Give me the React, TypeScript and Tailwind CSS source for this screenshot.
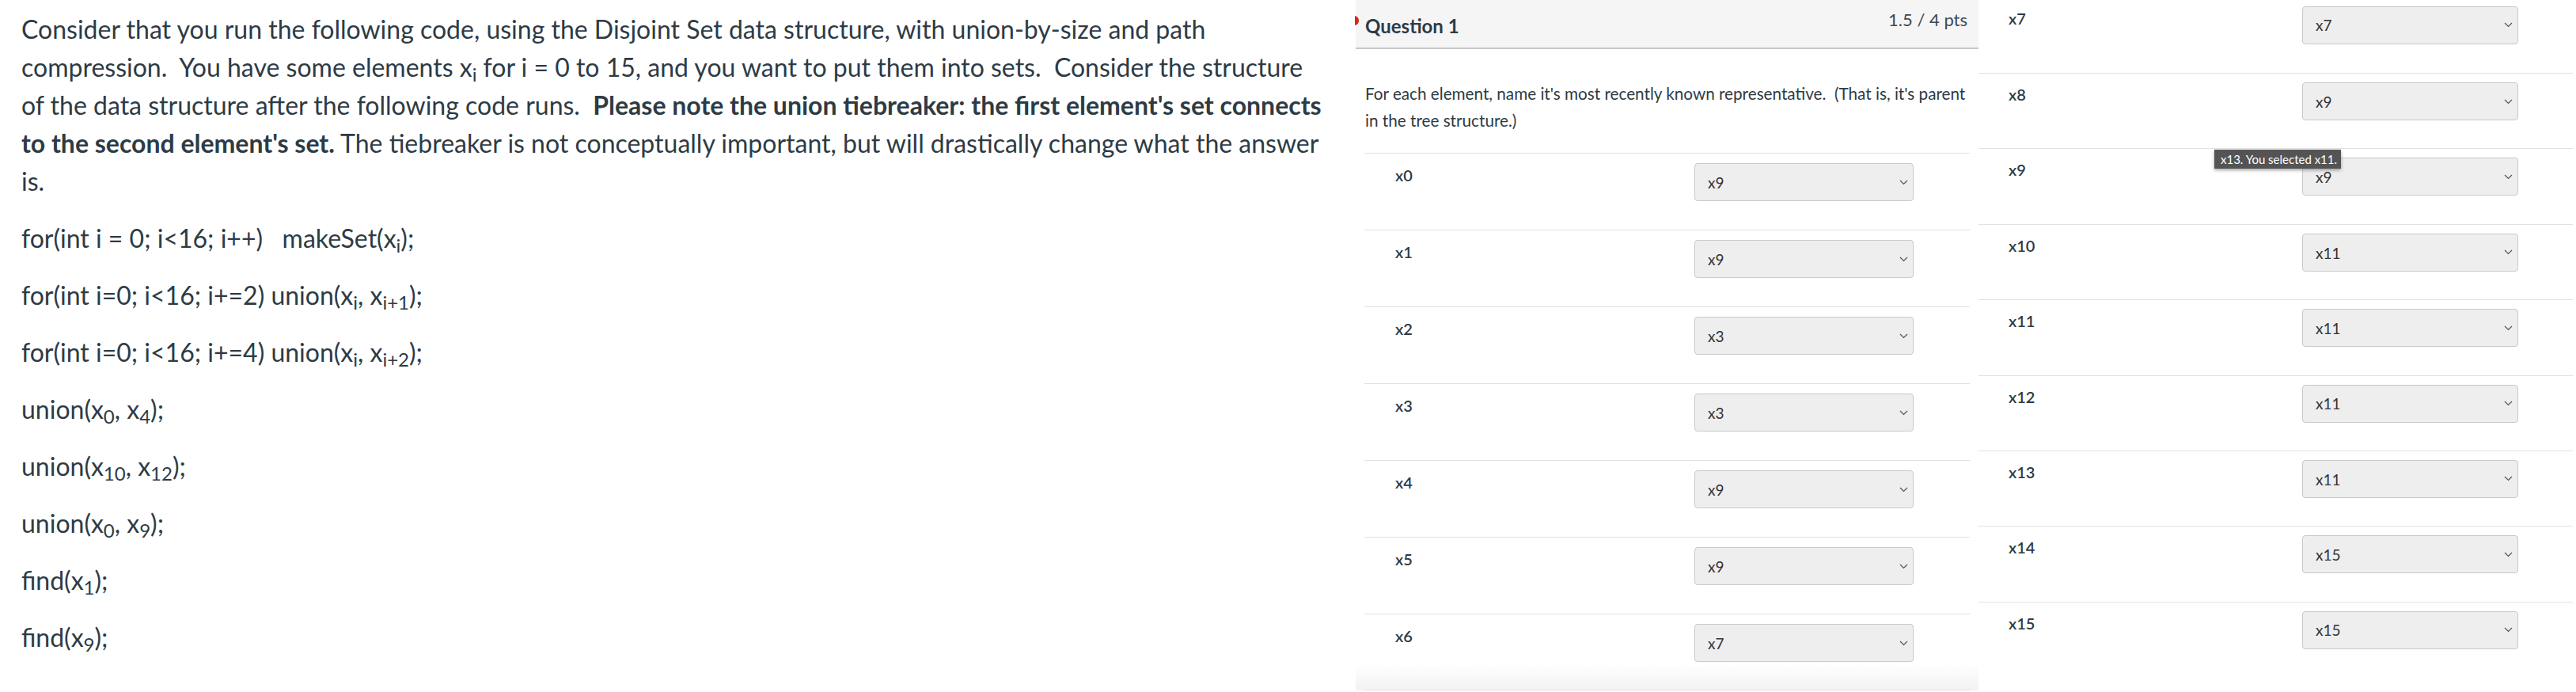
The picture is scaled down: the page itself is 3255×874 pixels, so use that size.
import React from "react";

const middleRows = [
  { name: "x0", value: "x9" },
  { name: "x1", value: "x9" },
  { name: "x2", value: "x3" },
  { name: "x3", value: "x3" },
  { name: "x4", value: "x9" },
  { name: "x5", value: "x9" },
  { name: "x6", value: "x7" },
];

const rightRows = [
  { name: "x7", value: "x7" },
  { name: "x8", value: "x9" },
  { name: "x9", value: "x9" },
  { name: "x10", value: "x11" },
  { name: "x11", value: "x11" },
  { name: "x12", value: "x11" },
  { name: "x13", value: "x11" },
  { name: "x14", value: "x15" },
  { name: "x15", value: "x15" },
];

function Chevron() {
  return (
    <svg width="11" height="7" viewBox="0 0 11 7" fill="none">
      <polyline points="1,1 5.5,5.5 10,1" stroke="#555" strokeWidth="1.2" />
    </svg>
  );
}

function FakeSelect({ value, width }: { value: string; width: string }) {
  return (
    <div
      className={`${width} h-[48px] shrink-0 rounded-[4px] border border-[#c9c9c9] bg-[#eeeeee] flex items-center justify-between pl-[16px] pr-[6px]`}
    >
      <span className="text-[19px] text-[#333] pt-[2px]">{value}</span>
      <Chevron />
    </div>
  );
}

function CodeLine({ children }: { children: React.ReactNode }) {
  return <p className="mt-[24px] leading-[48px]">{children}</p>;
}

export default function App() {
  return (
    <div className="flex h-[874px] w-[3255px] overflow-hidden bg-white font-[Lato,sans-serif] text-[#2d3b45]">
      {/* left: question text */}
      <div className="w-[1713px] shrink-0 pl-[27px] pr-[24px] pt-[13px] text-[32px] whitespace-nowrap">
        <p className="leading-[48px]">
          Consider that you run the following code, using the Disjoint Set data structure, with union-by-size and path
          <br />
          compression.&nbsp; You have some elements x<sub>i</sub> for i = 0 to 15, and you want to put them into
          sets.&nbsp; Consider the structure
          <br />
          of the data structure after the following code runs.&nbsp;{" "}
          <strong>Please note the union tiebreaker: the first element's set connects</strong>
          <br />
          <strong>to the second element's set.</strong> The tiebreaker is not conceptually important, but will
          drastically change what the answer
          <br />
          is.
        </p>
        <CodeLine>
          for(int i = 0; i&lt;16; i++)&nbsp;&nbsp; makeSet(x<sub>i</sub>);
        </CodeLine>
        <CodeLine>
          for(int i=0; i&lt;16; i+=2) union(x<sub>i</sub>, x<sub>i+1</sub>);
        </CodeLine>
        <CodeLine>
          for(int i=0; i&lt;16; i+=4) union(x<sub>i</sub>, x<sub>i+2</sub>);
        </CodeLine>
        <CodeLine>
          union(x<sub>0</sub>, x<sub>4</sub>);
        </CodeLine>
        <CodeLine>
          union(x<sub>10</sub>, x<sub>12</sub>);
        </CodeLine>
        <CodeLine>
          union(x<sub>0</sub>, x<sub>9</sub>);
        </CodeLine>
        <CodeLine>
          find(x<sub>1</sub>);
        </CodeLine>
        <CodeLine>
          find(x<sub>9</sub>);
        </CodeLine>
      </div>

      {/* middle: question panel */}
      <div className="w-[787px] shrink-0 flex flex-col">
        <div className="relative h-[62px] shrink-0 bg-[#f5f5f5] border-b-2 border-[#c4c8cb] flex justify-between pl-[12px] pr-[14px]">
          <svg className="absolute left-[-1px] top-[20px]" width="5" height="12" viewBox="0 0 5 12">
            <path d="M0 0 C4 1 5 4 5 6 C5 8 4 11 0 12 Z" fill="#d9261c" />
          </svg>
          <h3 className="pt-[21px] text-[24px] font-bold leading-none">Question 1</h3>
          <div className="pt-[14px] text-[22px] leading-none text-[#3b4a54]">1.5 / 4 pts</div>
        </div>
        <div className="px-[11px]">
          <p className="mt-[39px] pl-[1px] text-[20.7px] leading-[34px] whitespace-nowrap">
            For each element, name it's most recently known representative.&nbsp; (That is, it's parent
            <br />
            in the tree structure.)
          </p>
          <div className="mt-[24px]">
            {middleRows.slice(0, 6).map((r) => (
              <div key={r.name} className="h-[97px] border-t border-[#e2e2e2] flex items-start">
                <div className="w-[417px] shrink-0 pl-[39px] pt-[17px] text-[20px] font-semibold leading-none">
                  {r.name}
                </div>
                <div className="pt-[12px]">
                  <FakeSelect value={r.value} width="w-[277px]" />
                </div>
              </div>
            ))}
          </div>
        </div>
        <div className="px-[11px] bg-linear-to-b from-white from-[66%] to-[#f2f2f2]">
          <div className="h-[97px] border-t border-b border-[#e2e2e2] flex items-start">
            <div className="w-[417px] shrink-0 pl-[39px] pt-[17px] text-[20px] font-semibold leading-none">
              {middleRows[6].name}
            </div>
            <div className="pt-[12px]">
              <FakeSelect value={middleRows[6].value} width="w-[277px]" />
            </div>
          </div>
        </div>
      </div>

      {/* right: continuation of answers */}
      <div className="relative w-[755px] shrink-0">
        <div className="mt-[-3.4px] w-[751px]">
          {rightRows.map((r, i) => (
            <div
              key={r.name}
              className={`h-[95.4px] flex items-start ${i > 0 ? "border-t border-[#e2e2e2]" : ""}`}
            >
              <div className="w-[409px] shrink-0 pl-[38px] pt-[16px] text-[20px] font-semibold leading-none">
                {r.name}
              </div>
              <div className="pt-[11px]">
                <FakeSelect value={r.value} width="w-[273px]" />
              </div>
            </div>
          ))}
        </div>
        <div className="absolute left-[298px] top-[189px] h-[24px] w-[160px] bg-[#545454] text-white text-[15px] leading-[24px] pl-[8px] whitespace-nowrap shadow-[0_2px_4px_rgba(0,0,0,0.35)]">
          x13. You selected x11.
        </div>
      </div>
    </div>
  );
}
